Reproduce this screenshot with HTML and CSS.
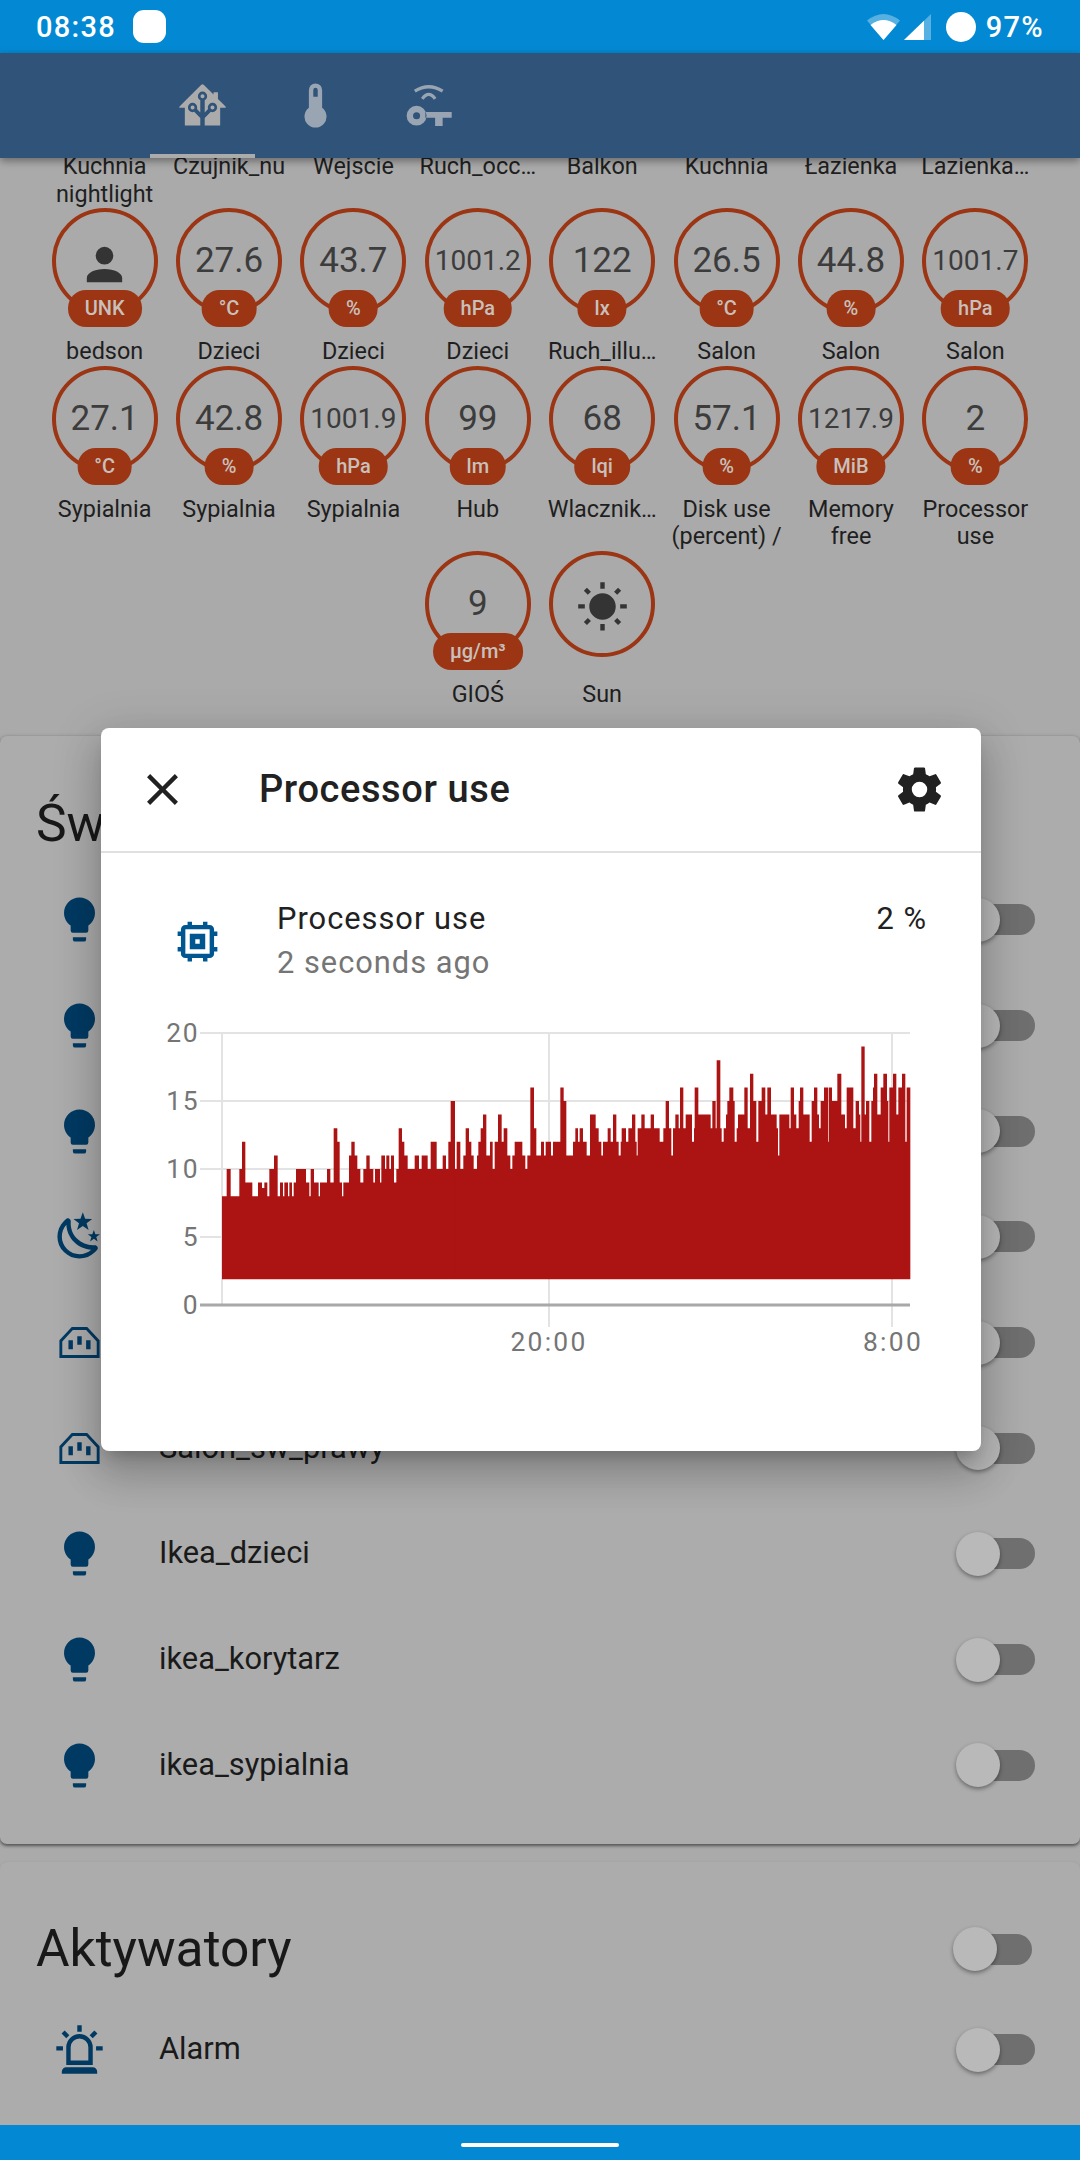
FILE: index.html
```html
<!DOCTYPE html>
<html lang="pl">
<head>
<meta charset="utf-8">
<title>Home Assistant</title>
<link rel="stylesheet" href="styles.css">
</head>
<body>
<svg class="defs" width="0" height="0">
  <symbol id="i-bulb" viewBox="0 0 24 24"><path d="M12,2A7,7 0 0,0 5,9C5,11.38 6.19,13.47 8,14.74V17A1,1 0 0,0 9,18H15A1,1 0 0,0 16,17V14.74C17.81,13.47 19,11.38 19,9A7,7 0 0,0 12,2M9,21A1,1 0 0,0 10,22H14A1,1 0 0,0 15,21V20H9V21Z"/></symbol>
  <symbol id="i-moon" viewBox="0 0 24 24"><path d="M17.75,4.09L15.22,6.03L16.13,9.09L13.5,7.28L10.87,9.09L11.78,6.03L9.25,4.09L12.44,4L13.5,1L14.56,4L17.75,4.09M21.25,11L19.61,12.25L20.2,14.23L18.5,13.06L16.8,14.23L17.39,12.25L15.75,11L17.81,10.95L18.5,9L19.19,10.95L21.25,11M18.97,15.95C19.8,15.87 20.69,17.05 20.16,17.8C19.84,18.25 19.5,18.67 19.08,19.07C15.17,23 8.84,23 4.94,19.07C1.03,15.17 1.03,8.83 4.94,4.93C5.34,4.53 5.76,4.17 6.21,3.85C6.96,3.32 8.14,4.21 8.06,5.04C7.79,7.9 8.75,10.87 10.95,13.06C13.14,15.26 16.1,16.22 18.97,15.95M17.33,17.97C14.5,17.81 11.7,16.64 9.53,14.5C7.36,12.31 6.2,9.5 6.04,6.68C3.23,9.82 3.34,14.64 6.35,17.66C9.37,20.67 14.19,20.78 17.33,17.97Z"/></symbol>
  <symbol id="i-socket" viewBox="0 0 24 24"><path fill-rule="evenodd" d="M2.9 19V11L8.5 5H15.5L21.1 11V19ZM4.2 17.7H19.8V11.5L15 6.3H9L4.2 11.5Z"/><path d="M7 11H9V15H7ZM11 9.2H13V13H11ZM15 11H17V15H15Z"/></symbol>
  <symbol id="i-alarm" viewBox="0 0 24 24"><path d="M6,6.9L3.87,4.78L5.28,3.37L7.4,5.5L6,6.9M13,1V4H11V1H13M20.13,4.78L18,6.9L16.6,5.5L18.72,3.37L20.13,4.78M4.5,10.5V12.5H1.5V10.5H4.5M19.5,10.5H22.5V12.5H19.5V10.5M6,20H18A2,2 0 0,1 20,22V23H4V22A2,2 0 0,1 6,20M12,5A6,6 0 0,1 18,11V19H6V11A6,6 0 0,1 12,5M12,7A4,4 0 0,0 8,11V17H16V11A4,4 0 0,0 12,7Z"/></symbol>
</svg>

<div class="app">
  <div class="status">
    <div class="status-left">
      <span class="status-text">08:38</span>
      <span class="status-notif"></span>
    </div>
    <div class="status-right">
      <svg class="wifi" viewBox="0 0 33 26"><path class="faint" d="M0 6.5Q16.5 -6.5 33 6.5L16.5 26Z"/><path d="M3.5 11Q16.5 1 29.5 11L16.5 26Z"/></svg>
      <svg class="signal" viewBox="0 0 27 26"><path class="faint" d="M0 26L27 0V26Z"/><path d="M0 26L20 6.7V26Z"/></svg>
      <span class="battery"></span>
      <span class="status-text">97%</span>
    </div>
  </div>

  <header class="header">
    <div class="tab">
      <svg class="icon tab-active" viewBox="0 0 24 24"><path d="M21.8,13H20V21H13V17.67L15.79,14.88L16.5,15C17.66,15 18.6,14.06 18.6,12.9C18.6,11.74 17.66,10.8 16.5,10.8A2.1,2.1 0 0,0 14.4,12.9L14.5,13.61L13,15.13V9.65C13.66,9.29 14.1,8.6 14.1,7.8A2.1,2.1 0 0,0 12,5.7A2.1,2.1 0 0,0 9.9,7.8C9.9,8.6 10.34,9.29 11,9.65V15.13L9.5,13.61L9.6,12.9A2.1,2.1 0 0,0 7.5,10.8A2.1,2.1 0 0,0 5.4,12.9A2.1,2.1 0 0,0 7.5,15L8.21,14.88L11,17.67V21H4V13H2.25C1.83,13 1.42,13 1.42,12.79C1.43,12.57 1.85,12.15 2.28,11.72L11,3C11.33,2.67 11.67,2.33 12,2.33C12.33,2.33 12.67,2.67 13,3L17,7V6H19V9L21.78,11.78C22.18,12.18 22.59,12.59 22.6,12.8C22.6,13 22.2,13 21.8,13M7.5,12A0.9,0.9 0 0,1 8.4,12.9A0.9,0.9 0 0,1 7.5,13.8A0.9,0.9 0 0,1 6.6,12.9A0.9,0.9 0 0,1 7.5,12M16.5,12C17,12 17.4,12.4 17.4,12.9C17.4,13.4 17,13.8 16.5,13.8A0.9,0.9 0 0,1 15.6,12.9A0.9,0.9 0 0,1 16.5,12M12,6.9C12.5,6.9 12.9,7.3 12.9,7.8C12.9,8.3 12.5,8.7 12,8.7C11.5,8.7 11.1,8.3 11.1,7.8C11.1,7.3 11.5,6.9 12,6.9Z"/></svg>
      <span class="tab-bar"></span>
    </div>
    <div class="tab">
      <svg class="icon" viewBox="0 0 24 24"><path d="M15 13V5A3 3 0 0 0 9 5V13A5 5 0 1 0 15 13M12 4A1 1 0 0 1 13 5V8H11V5A1 1 0 0 1 12 4Z"/></svg>
    </div>
    <div class="tab">
      <svg class="icon" viewBox="0 0 24 24"><path fill-rule="evenodd" d="M6.6 12.1A4.5 4.5 0 1 1 6.6 21.1A4.5 4.5 0 1 1 6.6 12.1ZM10.6 14.9H22.5V17.6H18.4V21.3H15V17.6H10.6ZM6.6 15A1.6 1.6 0 1 0 6.6 18.2A1.6 1.6 0 1 0 6.6 15Z"/><path class="key-arc" d="M5.8 5.5Q12.1 1.5 18.4 5.5M9.2 9Q12.1 5 15 9"/></svg>
    </div>
  </header>

  <main class="main">
    <section class="badges">
      <div class="badge badge-clipped"><div class="badge-name">Kuchnia nightlight</div></div>
      <div class="badge badge-clipped"><div class="badge-name">Czujnik_nu</div></div>
      <div class="badge badge-clipped"><div class="badge-name">Wejscie</div></div>
      <div class="badge badge-clipped"><div class="badge-name">Ruch_occ…</div></div>
      <div class="badge badge-clipped"><div class="badge-name">Balkon</div></div>
      <div class="badge badge-clipped"><div class="badge-name">Kuchnia</div></div>
      <div class="badge badge-clipped"><div class="badge-name">Łazienka</div></div>
      <div class="badge badge-clipped"><div class="badge-name">Lazienka…</div></div>

      <div class="badge"><div class="ring"><svg class="icon ring-icon" viewBox="0 0 24 24"><path d="M12,4A4,4 0 0,1 16,8A4,4 0 0,1 12,12A4,4 0 0,1 8,8A4,4 0 0,1 12,4M12,14C16.42,14 20,15.79 20,18V20H4V18C4,15.79 7.58,14 12,14Z"/></svg><span class="unit">UNK</span></div><div class="badge-name">bedson</div></div>
      <div class="badge"><div class="ring"><span class="value">27.6</span><span class="unit">°C</span></div><div class="badge-name">Dzieci</div></div>
      <div class="badge"><div class="ring"><span class="value">43.7</span><span class="unit">%</span></div><div class="badge-name">Dzieci</div></div>
      <div class="badge"><div class="ring"><span class="value value-long">1001.2</span><span class="unit">hPa</span></div><div class="badge-name">Dzieci</div></div>
      <div class="badge"><div class="ring"><span class="value">122</span><span class="unit">lx</span></div><div class="badge-name">Ruch_illu…</div></div>
      <div class="badge"><div class="ring"><span class="value">26.5</span><span class="unit">°C</span></div><div class="badge-name">Salon</div></div>
      <div class="badge"><div class="ring"><span class="value">44.8</span><span class="unit">%</span></div><div class="badge-name">Salon</div></div>
      <div class="badge"><div class="ring"><span class="value value-long">1001.7</span><span class="unit">hPa</span></div><div class="badge-name">Salon</div></div>

      <div class="badge"><div class="ring"><span class="value">27.1</span><span class="unit">°C</span></div><div class="badge-name">Sypialnia</div></div>
      <div class="badge"><div class="ring"><span class="value">42.8</span><span class="unit">%</span></div><div class="badge-name">Sypialnia</div></div>
      <div class="badge"><div class="ring"><span class="value value-long">1001.9</span><span class="unit">hPa</span></div><div class="badge-name">Sypialnia</div></div>
      <div class="badge"><div class="ring"><span class="value">99</span><span class="unit">lm</span></div><div class="badge-name">Hub</div></div>
      <div class="badge"><div class="ring"><span class="value">68</span><span class="unit">lqi</span></div><div class="badge-name">Wlacznik…</div></div>
      <div class="badge"><div class="ring"><span class="value">57.1</span><span class="unit">%</span></div><div class="badge-name">Disk use (percent) /</div></div>
      <div class="badge"><div class="ring"><span class="value value-long">1217.9</span><span class="unit">MiB</span></div><div class="badge-name">Memory free</div></div>
      <div class="badge"><div class="ring"><span class="value">2</span><span class="unit">%</span></div><div class="badge-name">Processor use</div></div>

      <div class="badge"><div class="ring"><span class="value">9</span><span class="unit">µg/m³</span></div><div class="badge-name">GIOŚ</div></div>
      <div class="badge"><div class="ring"><svg class="icon ring-icon" viewBox="0 0 24 24"><path d="M3.55,18.54L4.96,19.95L6.76,18.16L5.34,16.74M11,22.45C11.32,22.45 13,22.45 13,22.45V19.5H11M12,5.5A6,6 0 0,0 6,11.5A6,6 0 0,0 12,17.5A6,6 0 0,0 18,11.5C18,8.18 15.31,5.5 12,5.5M20,12.5H23V10.5H20M17.24,18.16L19.04,19.95L20.45,18.54L18.66,16.74M20.45,4.46L19.04,3.05L17.24,4.84L18.66,6.26M13,0.55H11V3.5H13M4,10.5H1V12.5H4M6.76,4.84L4.96,3.05L3.55,4.46L5.34,6.26L6.76,4.84Z"/></svg></div><div class="badge-name">Sun</div></div>
    </section>

    <section class="card card-lights">
      <h2 class="card-title">Światła</h2>
      <div class="row"><svg class="icon row-icon"><use href="#i-bulb"/></svg><span class="row-name"></span><span class="toggle"></span></div>
      <div class="row"><svg class="icon row-icon"><use href="#i-bulb"/></svg><span class="row-name"></span><span class="toggle"></span></div>
      <div class="row"><svg class="icon row-icon"><use href="#i-bulb"/></svg><span class="row-name"></span><span class="toggle"></span></div>
      <div class="row"><svg class="icon row-icon"><use href="#i-moon"/></svg><span class="row-name"></span><span class="toggle"></span></div>
      <div class="row"><svg class="icon row-icon"><use href="#i-socket"/></svg><span class="row-name"></span><span class="toggle"></span></div>
      <div class="row"><svg class="icon row-icon"><use href="#i-socket"/></svg><span class="row-name">Salon_sw_prawy</span><span class="toggle"></span></div>
      <div class="row"><svg class="icon row-icon"><use href="#i-bulb"/></svg><span class="row-name">Ikea_dzieci</span><span class="toggle"></span></div>
      <div class="row"><svg class="icon row-icon"><use href="#i-bulb"/></svg><span class="row-name">ikea_korytarz</span><span class="toggle"></span></div>
      <div class="row"><svg class="icon row-icon"><use href="#i-bulb"/></svg><span class="row-name">ikea_sypialnia</span><span class="toggle"></span></div>
    </section>

    <section class="card card-actuators">
      <div class="card-head"><h2 class="card-title">Aktywatory</h2><span class="toggle"></span></div>
      <div class="row"><svg class="icon row-icon"><use href="#i-alarm"/></svg><span class="row-name">Alarm</span><span class="toggle"></span></div>
    </section>
  </main>

  <div class="navbar"><span class="home-pill"></span></div>

  <div class="dialog">
    <div class="dialog-head">
      <svg class="icon dialog-close" viewBox="0 0 24 24"><path d="M19,6.41L17.59,5L12,10.59L6.41,5L5,6.41L10.59,12L5,17.59L6.41,19L12,13.41L17.59,19L19,17.59L13.41,12L19,6.41Z"/></svg>
      <div class="dialog-title">Processor use</div>
      <svg class="icon dialog-gear" viewBox="0 0 24 24"><path d="M12,15.5A3.5,3.5 0 0,1 8.5,12A3.5,3.5 0 0,1 12,8.5A3.5,3.5 0 0,1 15.5,12A3.5,3.5 0 0,1 12,15.5M19.43,12.97C19.47,12.65 19.5,12.33 19.5,12C19.5,11.67 19.47,11.34 19.43,11L21.54,9.37C21.73,9.22 21.78,8.95 21.66,8.73L19.66,5.27C19.54,5.05 19.27,4.96 19.05,5.05L16.56,6.05C16.04,5.66 15.5,5.32 14.87,5.07L14.5,2.42C14.46,2.18 14.25,2 14,2H10C9.75,2 9.54,2.18 9.5,2.42L9.13,5.07C8.5,5.32 7.96,5.66 7.44,6.05L4.95,5.05C4.73,4.96 4.46,5.05 4.34,5.27L2.34,8.73C2.21,8.95 2.27,9.22 2.46,9.37L4.57,11C4.53,11.34 4.5,11.67 4.5,12C4.5,12.33 4.53,12.65 4.57,12.97L2.46,14.63C2.27,14.78 2.21,15.05 2.34,15.27L4.34,18.73C4.46,18.95 4.73,19.03 4.95,18.95L7.44,17.94C7.96,18.34 8.5,18.68 9.13,18.93L9.5,21.58C9.54,21.82 9.75,22 10,22H14C14.25,22 14.46,21.82 14.5,21.58L14.87,18.93C15.5,18.67 16.04,18.34 16.56,17.94L19.05,18.95C19.27,19.03 19.54,18.95 19.66,18.73L21.66,15.27C21.78,15.05 21.73,14.78 21.54,14.63L19.43,12.97Z"/></svg>
    </div>
    <div class="dialog-body">
      <div class="entity">
        <svg class="icon entity-icon" viewBox="0 0 24 24"><path fill-rule="evenodd" d="M7.5 3H9.5V4.5H14.5V3H16.5V4.5H17.5A2 2 0 0 1 19.5 6.5V7.5H21V9.5H19.5V14.5H21V16.5H19.5V17.5A2 2 0 0 1 17.5 19.5H16.5V21H14.5V19.5H9.5V21H7.5V19.5H6.5A2 2 0 0 1 4.5 17.5V16.5H3V14.5H4.5V9.5H3V7.5H4.5V6.5A2 2 0 0 1 6.5 4.5H7.5ZM6.5 6.5V17.5H17.5V6.5ZM8.5 8.5H15.5V15.5H8.5ZM11 11V13H13V11Z"/></svg>
        <div class="entity-text">
          <div class="entity-name">Processor use</div>
          <div class="entity-time">2 seconds ago</div>
        </div>
        <div class="entity-value">2 %</div>
      </div>
      <svg class="chart" viewBox="101 1020 880 340">
        <path class="grid" d="M200 1033H910M200 1101H910M200 1169H910M200 1237H910M222 1033V1305M549 1033V1327M892 1033V1327"/>
        <g class="bars">
          <path transform="matrix(.33333 0 0 -13.6 220 1305)" d="M6 1.9V8H20V10H32V8H58V10H66V12H76V9H97V8H114V9H126V8.6H133V9H142V8H148V10H162V11H173V8H180V9H189V8H193V9H204V8H208V9H216V8H221V9H228V10H258V9H268V8H272V10H282V9H296V8H300V9H321V10H331V9H341V13H352V12H359V9H366V8H370V9H387V11H394V12H404V11H412V10H421V9H430V10H439V11H449V10H460V9H465V10H480V9H484V11H495V10H499V11H508V10H513V11H522V9H529V10H536V13H546V12H553V11H563V10H584V11H597V10H605V11H623V10H632V12H650V10H668V11H678V10H685V12H692V15H705V1.9Z"/>
          <path transform="matrix(.33333 0 0 -13.6 450 1305)" d="M15 1.9V10H20V12H31V10H40V11H47V13H57V12H64V11H71V10H81V11H85V12H92V13H99V14H109V11H120V12H128V10H134V12H144V14H155V12H161V13H172V11H181V10H187V11H194V12H217V11H226V10H232V11H241V16H252V13H259V11H273V12H282V11H287V12H303V11H309V12H331V16H341V15H349V11H369V12H376V13H384V12H389V13H399V12H410V11H420V14H437V13H446V12H454V11H459V12H473V13H482V12H489V14H499V12H506V11H512V12H515V13H528V12H535V13H546V14H556V12H560V11H563V13H574V14H584V13H602V14H612V13H629V12H640V13H647V15H657V13H664V11H669V13H676V14H686V13H690V1.9Z"/>
          <path transform="matrix(.33333 0 0 -13.6 680 1305)" d="M0 1.9V16H10V13H17V14H36V12H42V13H44V16H55V14H92V13H97V15H107V13H110V18H121V13H125V12H131V13H138V14H142V15H148V16H160V15H164V12H170V13H174V14H193V16H203V13H210V17H220V15H229V12H235V15H245V16H256V14H262V16H273V14H290V13H294V11H298V14H328V13H332V16H342V14H349V13H356V15H360V16H370V14H389V12H395V15H402V16H412V14H417V13H422V15H432V16H444V12H446V16H456V15H472V17H484V14H495V13H500V16H520V13H527V15H537V14H541V12H544V19H554V14H558V15H568V12H574V15H579V16H582V17H592V14H602V16H610V17H621V15H625V12H628V16H639V17H649V14H655V16H666V17H676V12H680V16H691V1.9Z"/>
        </g>
        <path class="axis" d="M200 1305H910"/>
        <g class="chart-y">
          <text x="199" y="1042">20</text>
          <text x="199" y="1110">15</text>
          <text x="199" y="1178">10</text>
          <text x="199" y="1246">5</text>
          <text x="199" y="1314">0</text>
        </g>
        <g class="chart-x">
          <text x="549" y="1351">20:00</text>
          <text x="893" y="1351">8:00</text>
        </g>
      </svg>
    </div>
  </div>
</div>
</body>
</html>
```

FILE: styles.css
```css
* { box-sizing: border-box; }
html, body { margin: 0; padding: 0; }
body { width: 1080px; height: 2160px; overflow: hidden; font-family: Roboto, "Noto Sans", sans-serif; background: #aaaaaa; }
.defs { position: absolute; }
.app { position: relative; width: 1080px; height: 2160px; display: flex; flex-direction: column; }
.icon { display: block; width: 53px; height: 53px; fill: currentColor; flex: none; }

/* status bar */
.status { height: 53px; flex: none; background: #0389d3; color: #fff; display: flex; align-items: center; justify-content: space-between; padding: 0 36px 0 36px; }
.status-left, .status-right { display: flex; align-items: center; }
.status-text { font-size: 29px; line-height: 34px; letter-spacing: 1.3px; font-weight: 500; }
.status-notif { width: 33px; height: 33px; margin-left: 17px; background: #fff; border-radius: 11px; }
.wifi { width: 33px; height: 26px; fill: #fff; }
.signal { width: 27px; height: 26px; fill: #fff; margin-left: 4px; }
.faint { opacity: .33; }
.battery { width: 30px; height: 30px; border-radius: 50%; background: #fff; margin-left: 15px; margin-right: 10px; }

/* header */
.header { height: 105px; flex: none; background: #2f5379; display: flex; padding-left: 146px; position: relative; z-index: 2; box-shadow: 0 3px 8px rgba(0,0,0,.38); color: #9aa5b3; }
.tab { width: 113px; display: flex; flex-direction: column; align-items: center; justify-content: space-between; padding-top: 26px; }
.tab-active { color: #ababab; }
.tab-bar { width: 105px; height: 4px; background: #ababab; }
.key-arc { fill: none; stroke: currentColor; stroke-width: 1.5; }

/* main */
.main { flex: 1; overflow: hidden; min-height: 0; }
.badges { display: flex; flex-wrap: wrap; justify-content: center; align-content: flex-start; width: 996px; margin: -6px auto 0; height: 583px; }
.badge { width: 124.4px; display: flex; flex-direction: column; align-items: center; }
.ring { position: relative; width: 106px; height: 106px; border: 4px solid #9b3513; border-radius: 50%; display: flex; align-items: center; justify-content: center; color: #3c3c3c; margin-bottom: 24px; }
.value { font-size: 35px; line-height: 40px; }
.value-long { font-size: 28px; }
.ring-icon { color: #343434; margin-top: 6px; }
.unit { position: absolute; top: 78px; left: 50%; transform: translateX(-50%); height: 37px; min-width: 46px; padding: 0 17px; border-radius: 18px; background: #9b3513; color: #c9c0bc; font-size: 20px; font-weight: 500; line-height: 37px; text-align: center; white-space: nowrap; }
.badge-name { width: 118px; font-size: 23.4px; line-height: 27px; text-align: center; color: #1f1f1f; padding-bottom: 1px; }
.badge-clipped .badge-name { height: 56px; line-height: 28px; padding-bottom: 0; }

/* cards */
.card { background: #acacac; border-radius: 7px; }
.card-lights { height: 1108px; box-shadow: 0 2px 3px rgba(0,0,0,.34), 0 1px 4px rgba(0,0,0,.3); margin-top: 1px; }
.card-actuators { margin-top: 18px; height: 300px; box-shadow: 0 0 2px rgba(0,0,0,.1); }
.card-title { margin: 0; font-size: 51.5px; font-weight: 400; line-height: 72px; color: #181818; padding-left: 36px; }
.card-lights .card-title { padding-top: 52px; margin-bottom: 7px; }
.card-head { display: flex; align-items: center; justify-content: space-between; padding: 51px 48px 12px 0; }
.row { height: 105.7px; display: flex; align-items: center; padding: 0 45px 0 53px; }
.row-name { flex: 1; margin-left: 53px; padding-bottom: 2px; font-size: 30.8px; color: #1a1a1a; }
.row-icon { color: #003a63; }
.toggle { position: relative; width: 63px; height: 31px; background: #6f6f6f; border-radius: 16px; flex: none; }
.toggle::before { content: ""; position: absolute; left: -16px; top: -6.5px; width: 44px; height: 44px; border-radius: 50%; background: #b9b9b9; box-shadow: 0 2px 4px rgba(0,0,0,.4); }

/* navbar */
.navbar { height: 35px; flex: none; background: #0389d3; display: flex; justify-content: center; padding-top: 18px; position: relative; z-index: 2; }
.home-pill { width: 158px; height: 4px; border-radius: 2px; background: #fff; }

/* dialog */
.dialog { position: absolute; left: 101px; top: 728px; width: 880px; height: 723px; background: #fff; border-radius: 8px; z-index: 3; box-shadow: 0 11px 15px -7px rgba(0,0,0,.2), 0 24px 38px 3px rgba(0,0,0,.14), 0 9px 46px 8px rgba(0,0,0,.12); }
.dialog-head { height: 125px; border-bottom: 2px solid #e0e0e0; display: flex; align-items: center; padding: 0 35px 1px 35px; color: #212121; }
.dialog-title { flex: 1; margin-left: 70px; font-size: 38px; font-weight: 500; letter-spacing: .6px; }
.dialog-body { padding-top: 44px; }
.entity { display: flex; height: 88px; padding: 0 54px 0 70px; align-items: center; }
.entity-icon { color: #005691; }
.entity-text { flex: 1; margin-left: 53px; }
.entity-name, .entity-value { font-size: 30.8px; line-height: 44px; color: #212121; letter-spacing: 1px; }
.entity-time { font-size: 30.8px; line-height: 44px; color: #757575; letter-spacing: 1px; }
.entity-value { align-self: flex-start; }
.chart { display: block; width: 880px; height: 340px; margin-top: 35px; }
.grid { fill: none; stroke: #e3e3e3; stroke-width: 2; }
.axis { fill: none; stroke: #a8a8a8; stroke-width: 3; }
.bars path { fill: #ac1313; }
.chart-y text, .chart-x text { font-family: Roboto, sans-serif; font-size: 26.4px; letter-spacing: 1.5px; fill: #757575; }
.chart-x text { letter-spacing: 2.3px; }
.chart-y text { text-anchor: end; }
.chart-x text { text-anchor: middle; }
```
